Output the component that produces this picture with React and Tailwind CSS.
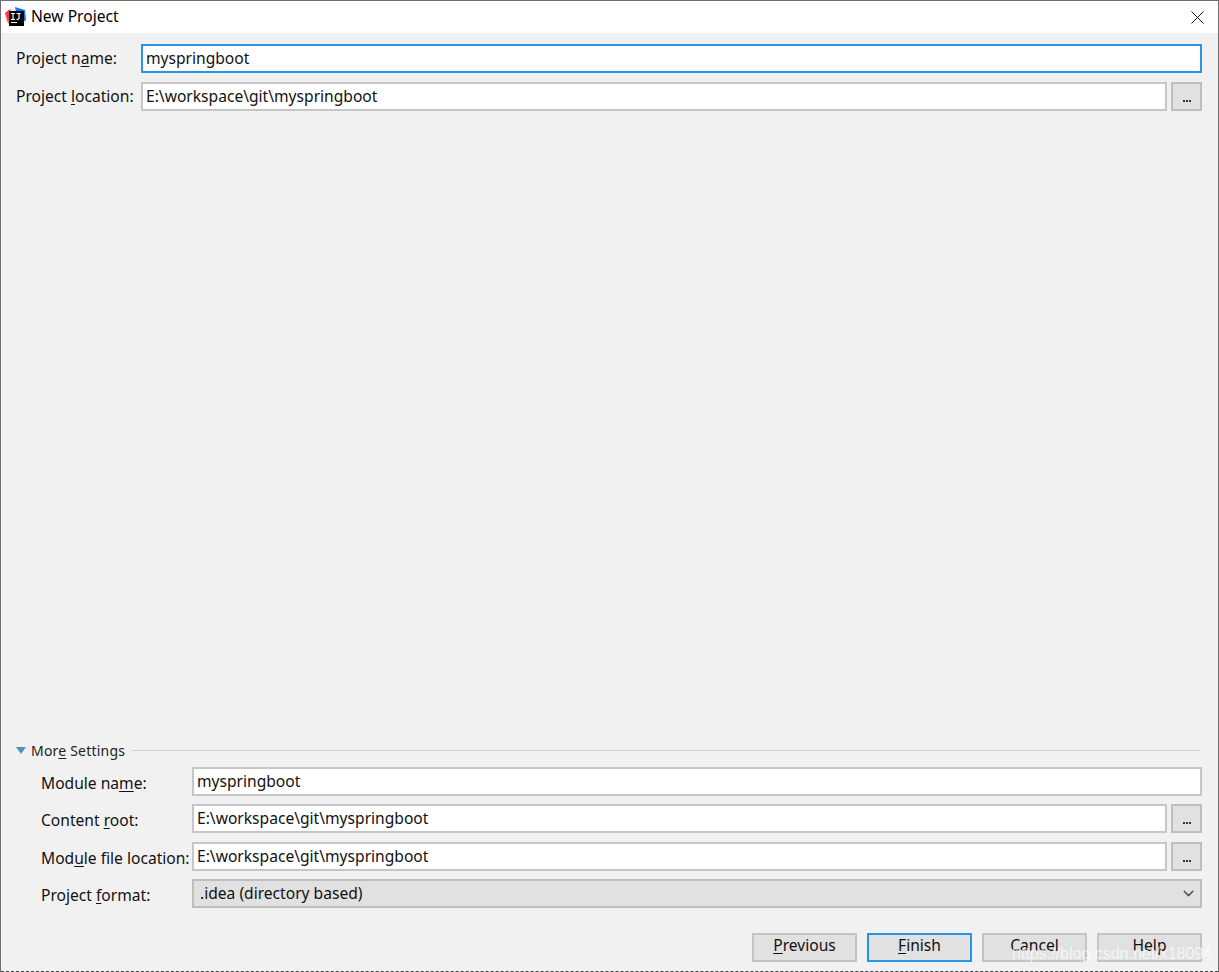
import { ChevronDown } from "lucide-react";

const label = "text-[15.6px] leading-[20px] text-[#111]";

function Mn({ children }) {
  return <span className="underline decoration-1 underline-offset-2">{children}</span>;
}

function Field({ value, focused }) {
  return (
    <div
      className={`flex-1 h-[29px] flex items-center pl-[3px] bg-white text-[15.6px] text-[#111] border-2 ${
        focused ? "border-[#2a93e3]" : "border-[#c6c6c6]"
      }`}
    >
      {value}
    </div>
  );
}

function Browse() {
  return (
    <div className="w-[31px] h-[29px] ml-[4px] flex items-end justify-center pb-[7px] gap-[1px] bg-[#e1e1e1] border-2 border-[#bebebe]">
      <span className="w-[2px] h-[2px] bg-[#333]" />
      <span className="w-[2px] h-[2px] bg-[#333]" />
      <span className="w-[2px] h-[2px] bg-[#333]" />
    </div>
  );
}

function Row({ text, width, mt = "", low, children }) {
  return (
    <div className={`flex items-center ${mt}`}>
      <div className={`${width} shrink-0 whitespace-nowrap ${low ? "pt-[3px]" : "pb-[1px]"} ${label}`}>{text}</div>
      {children}
    </div>
  );
}

function Btn({ children, primary }) {
  return (
    <div
      className={`w-[105px] h-[29px] flex items-center justify-center pb-[3px] bg-[#e1e1e1] text-[15.6px] text-[#111] border-2 ${
        primary ? "border-[#2a93e3]" : "border-[#c4c4c4]"
      }`}
    >
      <span>{children}</span>
    </div>
  );
}

function Logo() {
  return (
    <svg width="21" height="20" viewBox="0 0 21 20" className="shrink-0">
      <path d="M0 6 L5 2 L8 12 L3 16 Z" fill="#fe315d" />
      <path d="M1 12 L5 19 L10 15 Z" fill="#f97a12" />
      <path d="M10 0 L20 3 L21 13 L14 19 Z" fill="#087cfa" />
      <rect x="4" y="4" width="15" height="15" fill="#000" />
      <rect x="6" y="15" width="6" height="1" fill="#fff" />
      <path d="M6 6.5 H10 M8 6.5 V12.5 M6 12.5 H10 M11.5 6.5 H15.5 M14 6.5 V11 Q14 12.5 11.5 12.5" stroke="#fff" strokeWidth="1.2" fill="none" />
    </svg>
  );
}

export default function App() {
  return (
    <div className="relative w-[1219px] h-[972px] overflow-hidden flex flex-col bg-[#f1f1f1] border-t border-l border-r border-[#6e6e6e] font-['Noto_Sans','Open_Sans',sans-serif]">
      {/* Title bar */}
      <div className="h-[32px] shrink-0 bg-white flex items-center pl-[4px] pr-[14px]">
        <Logo />
        <span className="ml-[5px] text-[15.6px] text-black">New Project</span>
        <svg width="13" height="13" viewBox="0 0 13 13" className="ml-auto">
          <path d="M0.5 0.5 L12.5 12.5 M12.5 0.5 L0.5 12.5" stroke="#111" strokeWidth="1" />
        </svg>
      </div>

      {/* Top form */}
      <div className="pl-[15px] pr-[16px] pt-[11px]">
        <Row text={<>Project n<Mn>a</Mn>me:</>} width="w-[125px]">
          <Field value="myspringboot" focused />
        </Row>
        <Row text={<>Project <Mn>l</Mn>ocation:</>} width="w-[125px]" mt="mt-[9px]">
          <Field value="E:\workspace\git\myspringboot" />
          <Browse />
        </Row>
      </div>

      <div className="flex-1" />

      {/* More settings */}
      <div className="pl-[15px] pr-[16px]">
        <div className="flex items-center h-[20px]">
          <svg width="10" height="7" viewBox="0 0 10 7" className="shrink-0 mb-[4px]">
            <path d="M0 0 H10 L5 7 Z" fill="#4b93c3" />
          </svg>
          <span className="ml-[5px] pb-[3px] text-[14px] text-[#222] tracking-[0.2px]">
            Mor<Mn>e</Mn> Settings
          </span>
          <div className="flex-1 h-px bg-[#cfcfcf] ml-[6px] mr-[2px] mb-[4px]" />
        </div>
        <div className="pl-[25px] mt-[5px]">
          <Row low text={<>Module na<Mn>m</Mn>e:</>} width="w-[151px]">
            <Field value="myspringboot" />
          </Row>
          <Row low text={<>Content <Mn>r</Mn>oot:</>} width="w-[151px]" mt="mt-[8px]">
            <Field value="E:\workspace\git\myspringboot" />
            <Browse />
          </Row>
          <Row low text={<>Mod<Mn>u</Mn>le file location:</>} width="w-[151px]" mt="mt-[9px]">
            <Field value="E:\workspace\git\myspringboot" />
            <Browse />
          </Row>
          <Row low text={<>Project <Mn>f</Mn>ormat:</>} width="w-[151px]" mt="mt-[8px]">
            <div className="flex-1 h-[29px] flex items-center pl-[6px] pr-[3px] bg-[#e1e1e1] text-[15.6px] text-[#111] border-2 border-[#bebebe]">
              .idea (directory based)
              <ChevronDown size={17} strokeWidth={2} className="ml-auto text-[#555]" />
            </div>
          </Row>
        </div>
      </div>

      {/* Buttons */}
      <div className="flex justify-end gap-[10px] pr-[16px] mt-[25px] mb-[10px]">
        <Btn>
          <Mn>P</Mn>revious
        </Btn>
        <Btn primary>
          <Mn>F</Mn>inish
        </Btn>
        <Btn>Cancel</Btn>
        <Btn>Help</Btn>
      </div>

      {/* Watermark */}
      <div className="absolute left-[1011px] top-[941px] text-[16px] text-white/70 whitespace-nowrap font-['Liberation_Sans',sans-serif]">
        https://blog.csdn.net/x18094
      </div>
      <div className="absolute left-0 right-0 bottom-0 border-b border-dashed border-[#444]" />
    </div>
  );
}
